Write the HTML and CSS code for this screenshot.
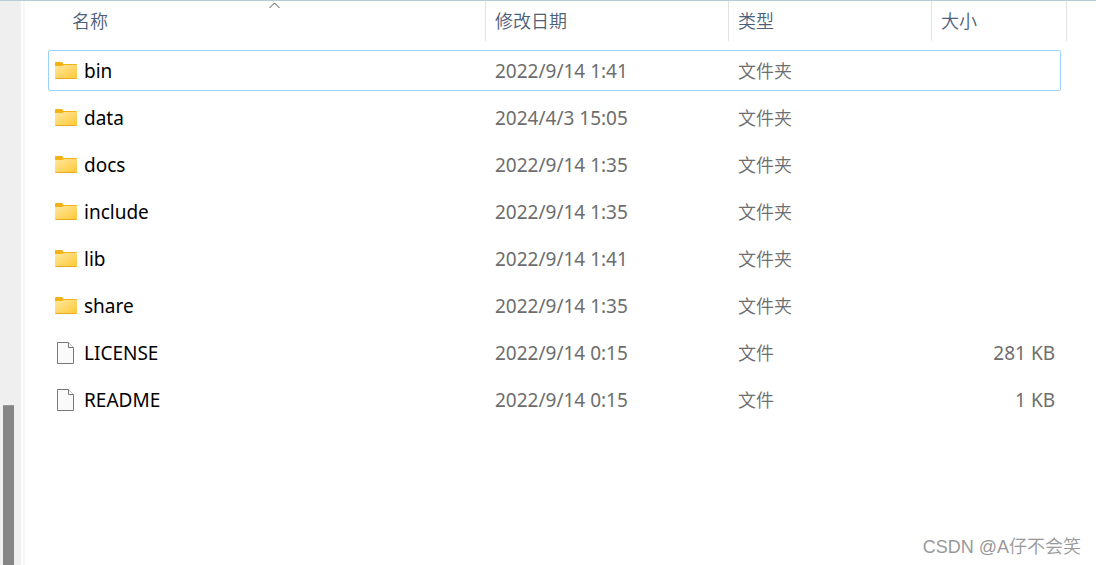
FILE: index.html
```
<!DOCTYPE html>
<html lang="zh-CN">
<head>
    <meta charset="UTF-8">
    <meta name="viewport" content="width=device-width, initial-scale=1.0">
    <title>文件列表</title>
    <link rel="stylesheet" href="styles.css">
</head>
<body>
    <svg class="symbols" width="0" height="0" aria-hidden="true">
        <defs>
            <linearGradient id="folder-fill" x1="0" y1="0" x2="1" y2="1">
                <stop offset="0" stop-color="#ffe8a0"/>
                <stop offset="1" stop-color="#ffc938"/>
            </linearGradient>
            <symbol id="folder" viewBox="0 0 22 23">
                <path d="M0 4Q0 3 1 3H7L8 4V5H21Q22 5 22 6V10H0Z" fill="#f5b217"/>
                <path d="M0 7H7L9 6H22V19H0Z" fill="url(#folder-fill)"/>
                <path d="M0 19H22Q22 20 21 20H1Q0 20 0 19Z" fill="#eba91d"/>
            </symbol>
            <symbol id="file" viewBox="0 0 22 23">
                <path d="M2.5 1.5H13.5L18.5 6.5V22.5H2.5Z" fill="#fafafa" stroke="#777"/>
                <path d="M13.5 1.5V6.5H18.5" fill="#fff" stroke="#777"/>
            </symbol>
        </defs>
    </svg>

    <div class="explorer">
        <div class="scrollbar">
            <div class="thumb"></div>
        </div>
        <div class="splitter"></div>

        <main class="content">
            <table class="files">
                <colgroup>
                    <col>
                    <col class="col-date">
                    <col class="col-type">
                    <col class="col-size">
                </colgroup>
                <thead>
                    <tr>
                        <th class="name" aria-sort="ascending">
                            <button type="button">名称</button>
                            <svg class="sort" width="11" height="7" viewBox="0 0 11 7" aria-hidden="true"><path d="M.5 6L5.5 1L10.5 6" fill="none" stroke="#555"/></svg>
                        </th>
                        <th><button type="button">修改日期</button></th>
                        <th><button type="button">类型</button></th>
                        <th><button type="button">大小</button></th>
                    </tr>
                </thead>
                <tbody>
                    <tr class="focused">
                        <td class="name"><div class="entry"><svg class="icon"><use href="#folder"/></svg>bin</div></td>
                        <td>2022/9/14 1:41</td>
                        <td class="type">文件夹</td>
                        <td class="size"></td>
                    </tr>
                    <tr>
                        <td class="name"><div class="entry"><svg class="icon"><use href="#folder"/></svg>data</div></td>
                        <td>2024/4/3 15:05</td>
                        <td class="type">文件夹</td>
                        <td class="size"></td>
                    </tr>
                    <tr>
                        <td class="name"><div class="entry"><svg class="icon"><use href="#folder"/></svg>docs</div></td>
                        <td>2022/9/14 1:35</td>
                        <td class="type">文件夹</td>
                        <td class="size"></td>
                    </tr>
                    <tr>
                        <td class="name"><div class="entry"><svg class="icon"><use href="#folder"/></svg>include</div></td>
                        <td>2022/9/14 1:35</td>
                        <td class="type">文件夹</td>
                        <td class="size"></td>
                    </tr>
                    <tr>
                        <td class="name"><div class="entry"><svg class="icon"><use href="#folder"/></svg>lib</div></td>
                        <td>2022/9/14 1:41</td>
                        <td class="type">文件夹</td>
                        <td class="size"></td>
                    </tr>
                    <tr>
                        <td class="name"><div class="entry"><svg class="icon"><use href="#folder"/></svg>share</div></td>
                        <td>2022/9/14 1:35</td>
                        <td class="type">文件夹</td>
                        <td class="size"></td>
                    </tr>
                    <tr>
                        <td class="name"><div class="entry"><svg class="icon"><use href="#file"/></svg>LICENSE</div></td>
                        <td>2022/9/14 0:15</td>
                        <td class="type">文件</td>
                        <td class="size">281 KB</td>
                    </tr>
                    <tr>
                        <td class="name"><div class="entry"><svg class="icon"><use href="#file"/></svg>README</div></td>
                        <td>2022/9/14 0:15</td>
                        <td class="type">文件</td>
                        <td class="size">1 KB</td>
                    </tr>
                </tbody>
            </table>
        </main>
    </div>

    <div class="watermark">CSDN @A仔不会笑</div>
</body>
</html>
```
FILE: styles.css
```
* {
    box-sizing: border-box;
}
body {
    margin: 0;
    background-color: #fff;
    color: #6d6d6d;
    font-family: "Noto Sans", "Noto Sans CJK SC", sans-serif;
    font-size: 19px;
}
.symbols {
    position: absolute;
}
.explorer {
    display: flex;
    min-height: 100vh;
    border-top: 1px solid #b3cfd5;
}
/* Left pane scrollbar */
.scrollbar {
    display: grid;
    grid-template-rows: 404fr 160fr;
    width: 21px;
    padding-left: 3px;
    background-color: #efefef;
}
.thumb {
    grid-row: 2;
    width: 11px;
    background-color: #858585;
    border-top: 1px solid #999;
}
.splitter {
    width: 4px;
    border-right: 2px solid #f7f7f7;
}
.content {
    flex: 1;
    padding: 0 29px 0 17px;
}
/* File list */
.files {
    width: 100%;
    table-layout: fixed;
    border-collapse: collapse;
}
.col-date {
    width: 243px;
}
.col-type {
    width: 203px;
}
.col-size {
    width: 135px;
}
th {
    position: relative;
    padding: 0 0 6px;
}
th button {
    display: block;
    width: 100%;
    height: 40px;
    padding: 0 9px 2px;
    border: 0;
    border-right: 1px solid #e2e2e2;
    background: none;
    color: #4c607a;
    font-family: "Noto Sans CJK SC", sans-serif;
    font-size: 18px;
    font-weight: 350;
    text-align: left;
}
th.name button {
    padding-left: 30px;
}
.sort {
    position: absolute;
    top: 1px;
    left: 227px;
}
td {
    height: 47px;
    padding: 0 9px;
    line-height: 24px;
    white-space: nowrap;
}
td.name {
    padding-left: 13px;
    color: #000;
}
td.type {
    padding-bottom: 2px;
    font-family: "Noto Sans CJK SC", sans-serif;
    font-size: 18px;
    font-weight: 350;
}
td.size {
    padding-right: 12px;
    text-align: right;
}
.entry {
    display: flex;
    align-items: center;
    gap: 7px;
}
.icon {
    width: 22px;
    height: 23px;
}
.focused {
    position: relative;
}
/* Focus frame round the whole row */
.focused .name::after {
    content: "";
    position: absolute;
    inset: 3px 6px;
    border: 1px solid #99d1ff;
    border-radius: 2px;
}
.watermark {
    position: absolute;
    right: 15px;
    bottom: 6px;
    color: #999;
    font-family: "Liberation Sans", "Noto Sans CJK SC", sans-serif;
    font-size: 18px;
    font-weight: 350;
    line-height: 24px;
}
```
